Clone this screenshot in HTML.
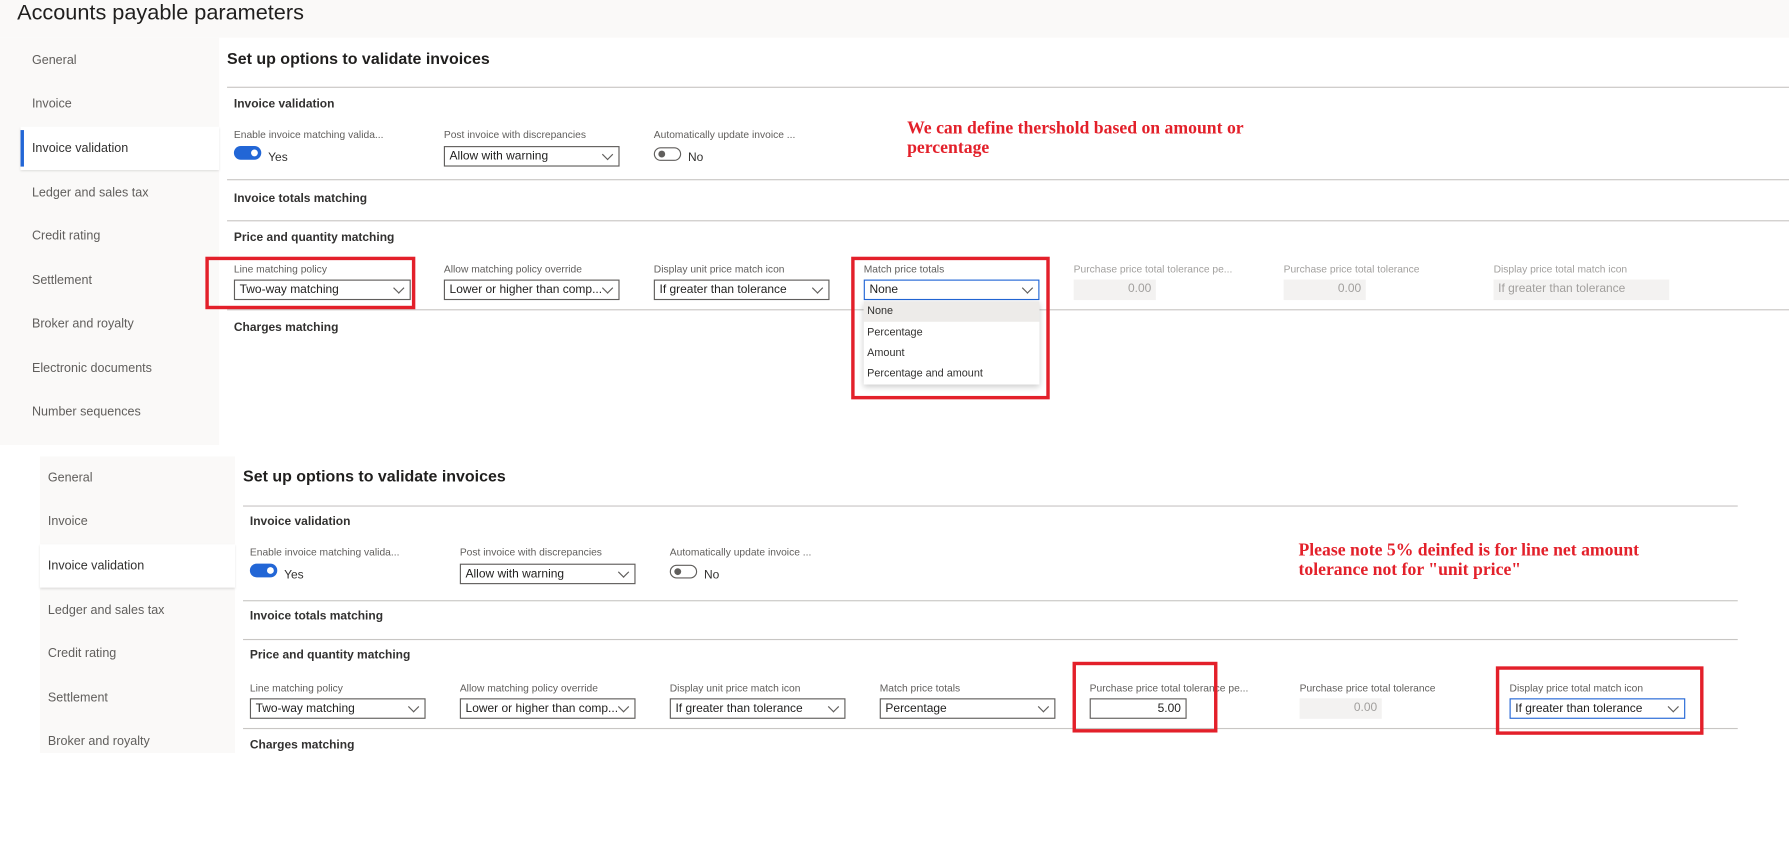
<!DOCTYPE html>
<html><head><meta charset="utf-8"><style>
*{margin:0;padding:0;box-sizing:border-box}
html,body{width:1789px;height:865px;overflow:hidden;background:#fff}
#w{position:absolute;left:0;top:0;width:1568px;height:758px;transform:scale(1.141);transform-origin:0 0;font-family:"Liberation Sans",sans-serif;color:#323130;overflow:hidden}
.a{position:absolute;white-space:nowrap}
.nav{font-size:11px;color:#605e5c}
.h{font-size:14px;color:#201f1e;font-weight:bold}
.sec{font-size:10.5px;font-weight:bold;color:#323130}
.lbl{font-size:9px;color:#605e5c}
.sel{height:18px;border:1px solid #605e5c;background:#fff;font-size:10.5px;padding:2px 0 0 4px;color:#201f1e}
.sel:after{content:"";position:absolute;right:6px;top:3px;width:6px;height:6px;border-right:1px solid #605e5c;border-bottom:1px solid #605e5c;transform:rotate(45deg)}
.nc:after{display:none}
.dis{height:18px;background:#f3f2f1;font-size:10.5px;color:#a19f9d;padding-top:2px}
.line{height:1px;background:#c8c6c4}
.rb{border:3px solid #e3202a}
.red{font-family:"Liberation Serif",serif;font-weight:bold;font-size:15.5px;color:#e3202a;line-height:17px}
.tg{width:24px;height:12px;border-radius:6px}
.on{background:#2266d6}
.on:after{content:"";position:absolute;right:3px;top:3px;width:6px;height:6px;border-radius:3px;background:#fff}
.off{border:1px solid #605e5c;background:#fff}
.off:after{content:"";position:absolute;left:3px;top:2px;width:6px;height:6px;border-radius:3px;background:#605e5c}
</style></head><body><div id="w">
<div class="a" style="left:0;top:0;width:1568px;height:33px;background:#faf9f8"></div>
<div class="a" style="left:15px;top:1px;font-size:19px;color:#201f1e">Accounts payable parameters</div>
<div class="a" style="left:0;top:33px;width:192px;height:357px;background:#faf9f8"></div>
<div class="a" style="left:18px;top:111px;width:174px;height:38px;background:#fff;box-shadow:0 1px 2px rgba(0,0,0,.12)"></div>
<div class="a" style="left:18px;top:114px;width:3px;height:32px;background:#2266d6"></div>
<div class="a nav" style="left:28px;top:47px">General</div>
<div class="a nav" style="left:28px;top:85px">Invoice</div>
<div class="a nav" style="left:28px;top:124px;color:#323130">Invoice validation</div>
<div class="a nav" style="left:28px;top:163px">Ledger and sales tax</div>
<div class="a nav" style="left:28px;top:201px">Credit rating</div>
<div class="a nav" style="left:28px;top:240px">Settlement</div>
<div class="a nav" style="left:28px;top:278px">Broker and royalty</div>
<div class="a nav" style="left:28px;top:317px">Electronic documents</div>
<div class="a nav" style="left:28px;top:355px">Number sequences</div>
<div class="a h" style="left:199px;top:43px">Set up options to validate invoices</div>
<div class="a line" style="left:199px;top:76px;width:1400px"></div>
<div class="a sec" style="left:205px;top:85px">Invoice validation</div>
<div class="a lbl" style="left:205px;top:113px">Enable invoice matching valida...</div>
<div class="a tg on" style="left:205px;top:128px"></div>
<div class="a" style="left:235px;top:132px;font-size:10.5px">Yes</div>
<div class="a lbl" style="left:389px;top:113px">Post invoice with discrepancies</div>
<div class="a sel" style="left:389px;top:128px;width:154px">Allow with warning</div>
<div class="a lbl" style="left:573px;top:113px">Automatically update invoice ...</div>
<div class="a tg off" style="left:573px;top:129px"></div>
<div class="a" style="left:603px;top:132px;font-size:10.5px">No</div>
<div class="a red" style="left:795px;top:104px">We can define thershold based on amount or<br>percentage</div>
<div class="a line" style="left:199px;top:157px;width:1400px"></div>
<div class="a sec" style="left:205px;top:168px">Invoice totals matching</div>
<div class="a line" style="left:199px;top:193px;width:1400px"></div>
<div class="a sec" style="left:205px;top:202px">Price and quantity matching</div>
<div class="a lbl" style="left:205px;top:231px">Line matching policy</div>
<div class="a sel" style="left:205px;top:245px;width:155px">Two-way matching</div>
<div class="a lbl" style="left:389px;top:231px">Allow matching policy override</div>
<div class="a sel" style="left:389px;top:245px;width:154px">Lower or higher than comp...</div>
<div class="a lbl" style="left:573px;top:231px">Display unit price match icon</div>
<div class="a sel" style="left:573px;top:245px;width:154px">If greater than tolerance</div>
<div class="a lbl" style="left:757px;top:231px">Match price totals</div>
<div class="a sel" style="left:757px;top:245px;width:154px;border-color:#2266d6">None</div>
<div class="a lbl" style="left:941px;top:231px;color:#a19f9d">Purchase price total tolerance pe...</div>
<div class="a dis" style="left:941px;top:245px;width:72px;text-align:right;padding-right:4px">0.00</div>
<div class="a lbl" style="left:1125px;top:231px;color:#a19f9d">Purchase price total tolerance</div>
<div class="a dis" style="left:1125px;top:245px;width:72px;text-align:right;padding-right:4px">0.00</div>
<div class="a lbl" style="left:1309px;top:231px;color:#a19f9d">Display price total match icon</div>
<div class="a dis" style="left:1309px;top:245px;width:154px;padding-left:4px">If greater than tolerance</div>
<div class="a line" style="left:199px;top:271px;width:1400px"></div>
<div class="a sec" style="left:205px;top:281px">Charges matching</div>
<div class="a" style="left:757px;top:264px;width:154px;height:73px;background:#fff;box-shadow:0 2px 5px rgba(0,0,0,.2);font-size:9.5px;color:#323130">
<div style="height:18px;background:#edebe9;padding:3px 0 0 3px">None</div>
<div style="height:18px;padding:4px 0 0 3px">Percentage</div>
<div style="height:18px;padding:4px 0 0 3px">Amount</div>
<div style="height:18px;padding:4px 0 0 3px">Percentage and amount</div>
</div>
<div class="a rb" style="left:180px;top:225px;width:184px;height:46px"></div>
<div class="a rb" style="left:746px;top:225px;width:174px;height:125px"></div>

<div class="a" style="left:35px;top:400px;width:171px;height:260px;background:#faf9f8"></div>
<div class="a" style="left:35px;top:477px;width:171px;height:38px;background:#fff;box-shadow:0 1px 2px rgba(0,0,0,.12)"></div>
<div class="a nav" style="left:42px;top:413px">General</div>
<div class="a nav" style="left:42px;top:451px">Invoice</div>
<div class="a nav" style="left:42px;top:490px;color:#323130">Invoice validation</div>
<div class="a nav" style="left:42px;top:529px">Ledger and sales tax</div>
<div class="a nav" style="left:42px;top:567px">Credit rating</div>
<div class="a nav" style="left:42px;top:606px">Settlement</div>
<div class="a nav" style="left:42px;top:644px">Broker and royalty</div>
<div class="a h" style="left:213px;top:409px">Set up options to validate invoices</div>
<div class="a line" style="left:213px;top:443px;width:1310px"></div>
<div class="a sec" style="left:219px;top:451px">Invoice validation</div>
<div class="a lbl" style="left:219px;top:479px">Enable invoice matching valida...</div>
<div class="a tg on" style="left:219px;top:494px"></div>
<div class="a" style="left:249px;top:498px;font-size:10.5px">Yes</div>
<div class="a lbl" style="left:403px;top:479px">Post invoice with discrepancies</div>
<div class="a sel" style="left:403px;top:494px;width:154px">Allow with warning</div>
<div class="a lbl" style="left:587px;top:479px">Automatically update invoice ...</div>
<div class="a tg off" style="left:587px;top:495px"></div>
<div class="a" style="left:617px;top:498px;font-size:10.5px">No</div>
<div class="a red" style="left:1138px;top:474px">Please note 5% deinfed is for line net amount<br>tolerance not for "unit price"</div>
<div class="a line" style="left:213px;top:526px;width:1310px"></div>
<div class="a sec" style="left:219px;top:534px">Invoice totals matching</div>
<div class="a line" style="left:213px;top:560px;width:1310px"></div>
<div class="a sec" style="left:219px;top:568px">Price and quantity matching</div>
<div class="a lbl" style="left:219px;top:598px">Line matching policy</div>
<div class="a sel" style="left:219px;top:612px;width:154px">Two-way matching</div>
<div class="a lbl" style="left:403px;top:598px">Allow matching policy override</div>
<div class="a sel" style="left:403px;top:612px;width:154px">Lower or higher than comp...</div>
<div class="a lbl" style="left:587px;top:598px">Display unit price match icon</div>
<div class="a sel" style="left:587px;top:612px;width:154px">If greater than tolerance</div>
<div class="a lbl" style="left:771px;top:598px">Match price totals</div>
<div class="a sel" style="left:771px;top:612px;width:154px">Percentage</div>
<div class="a lbl" style="left:955px;top:598px">Purchase price total tolerance pe...</div>
<div class="a sel nc" style="left:955px;top:612px;width:85px;text-align:right;padding-right:4px">5.00</div>
<div class="a lbl" style="left:1139px;top:598px">Purchase price total tolerance</div>
<div class="a dis" style="left:1139px;top:612px;width:72px;text-align:right;padding-right:4px">0.00</div>
<div class="a lbl" style="left:1323px;top:598px">Display price total match icon</div>
<div class="a sel" style="left:1323px;top:612px;width:154px;border-color:#2266d6">If greater than tolerance</div>
<div class="a line" style="left:213px;top:638px;width:1310px"></div>
<div class="a sec" style="left:219px;top:647px">Charges matching</div>
<div class="a rb" style="left:940px;top:580px;width:127px;height:62px"></div>
<div class="a rb" style="left:1311px;top:584px;width:182px;height:60px"></div>
<div class="a" style="left:0;top:660px;width:1568px;height:100px;background:#fff"></div>
</div></body></html>
